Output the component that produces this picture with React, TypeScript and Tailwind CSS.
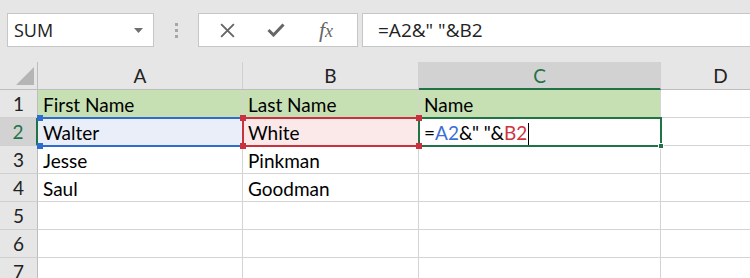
import React from 'react'

const COLS = [
  { key: 'A', w: 205 },
  { key: 'B', w: 176 },
  { key: 'C', w: 242 },
  { key: 'D', w: 120 },
]

const ROWS: { n: number; cells: (string | null)[] }[] = [
  { n: 1, cells: ['First Name', 'Last Name', 'Name', null] },
  { n: 2, cells: ['Walter', 'White', null, null] },
  { n: 3, cells: ['Jesse', 'Pinkman', null, null] },
  { n: 4, cells: ['Saul', 'Goodman', null, null] },
  { n: 5, cells: [null, null, null, null] },
  { n: 6, cells: [null, null, null, null] },
  { n: 7, cells: [null, null, null, null] },
]

const cellFont = { fontFamily: 'Lato, "Noto Sans", sans-serif' }

function Handle({ className }: { className: string }) {
  return <span className={`absolute w-[6px] h-[6px] ${className}`} />
}

export default function App() {
  return (
    <div className="w-[750px] h-[278px] overflow-hidden bg-white select-none">
      {/* Formula bar */}
      <div
        className="h-[62px] bg-[#e6e6e6] flex items-start pt-[13px] pl-[7px]"
        style={{ fontFamily: '"Open Sans", "Noto Sans", sans-serif' }}
      >
        <div className="w-[147px] h-[34px] bg-white border border-[#c6c6c6] flex items-center justify-between pl-[6px] pr-[10px]">
          <span className="text-[18px] text-[#222]">SUM</span>
          <svg width="9" height="5" viewBox="0 0 9 5">
            <path d="M0 0h9L4.5 5z" fill="#6f6f6f" />
          </svg>
        </div>
        <div className="w-[44px] h-[34px] flex flex-col items-center justify-center gap-[3px]">
          <span className="w-[3px] h-[3px] bg-[#a6a6a6]" />
          <span className="w-[3px] h-[3px] bg-[#a6a6a6]" />
          <span className="w-[3px] h-[3px] bg-[#a6a6a6]" />
        </div>
        <div className="w-[160px] h-[34px] bg-white border border-[#c6c6c6] flex items-center">
          <div className="w-[54px] flex justify-center pl-[2px]">
            <svg width="17" height="17" viewBox="0 0 16 16">
              <path d="M2 2l12 12M14 2L2 14" stroke="#666" strokeWidth="1.8" />
            </svg>
          </div>
          <div className="w-[46px] flex justify-center">
            <svg width="18" height="14" viewBox="0 0 18 14">
              <path d="M1.5 7l5 5L16.5 1.5" stroke="#666" strokeWidth="3" fill="none" />
            </svg>
          </div>
          <div className="flex-1 flex justify-center pr-[4px]">
            <span
              className="text-[22px] italic text-[#666] leading-none"
              style={{ fontFamily: '"Liberation Serif", "DejaVu Serif", serif' }}
            >
              f<span className="text-[18px]">x</span>
            </span>
          </div>
        </div>
        <div className="ml-[4px] flex-1 h-[34px] bg-white border border-r-0 border-[#c6c6c6] flex items-center pl-[15px]">
          <span className="text-[19px] text-[#222]">=A2&amp;" "&amp;B2</span>
        </div>
      </div>

      {/* Grid */}
      <div className="relative">
        {/* Column header row */}
        <div className="flex h-[28px] bg-[#e6e6e6] border-b border-[#bdbdbd]">
          <div className="w-[38px] shrink-0 border-r border-[#bdbdbd] relative">
            <svg className="absolute left-[16px] top-[5px]" width="18" height="18" viewBox="0 0 18 18">
              <path d="M18 0V18H0z" fill="#b5b5b5" />
            </svg>
          </div>
          {COLS.map((c) => (
            <div
              key={c.key}
              style={{ width: c.w, ...cellFont }}
              className={`shrink-0 flex items-center justify-center pt-[2px] text-[19px] border-r border-[#d0d0d0] ${
                c.key === 'C'
                  ? 'bg-[#d2d2d2] text-[#217346] border-b-2 border-b-[#217346] -mb-[1px]'
                  : 'text-[#222]'
              }`}
            >
              {c.key}
            </div>
          ))}
        </div>

        {/* Rows */}
        {ROWS.map((r) => (
          <div key={r.n} className="flex h-[28px]">
            <div
              style={cellFont}
              className={`w-[38px] shrink-0 flex items-center justify-center pt-[1px] text-[19px] border-b border-[#d0d0d0] ${
                r.n === 2
                  ? 'bg-[#d2d2d2] text-[#217346] border-r-2 border-r-[#217346]'
                  : 'bg-[#e6e6e6] text-[#222] border-r border-r-[#bdbdbd]'
              }`}
            >
              {r.n}
            </div>
            {COLS.map((c, i) => {
              let bg = 'bg-white'
              if (r.n === 1 && i < 3) bg = 'bg-[#c6e0b4]'
              if (r.n === 2 && i === 0) bg = 'bg-[#e9eef8]'
              if (r.n === 2 && i === 1) bg = 'bg-[#fbe9ea]'
              return (
                <div
                  key={c.key}
                  style={{ width: c.w, ...cellFont }}
                  className={`shrink-0 flex items-end pl-[5px] text-[19px] leading-[25px] text-black border-r border-b border-[#d4d4d4] ${bg}`}
                >
                  {r.cells[i]}
                </div>
              )
            })}
          </div>
        ))}

        {/* A2 reference outline */}
        <div className="absolute left-[38px] top-[55px] w-[206px] h-[30px] border-y-2 border-[#2f6cd0]">
          <Handle className="-left-[1px] -top-[4px] w-[4px] bg-[#2f6cd0]" />
          <Handle className="-left-[1px] -bottom-[4px] w-[4px] bg-[#2f6cd0]" />
        </div>

        {/* B2 reference outline */}
        <div className="absolute left-[242px] top-[55px] w-[179px] h-[30px] border-2 border-[#c8313d] border-r-0">
          <Handle className="-left-[4px] -top-[4px] bg-[#c8313d]" />
          <Handle className="-left-[4px] -bottom-[4px] bg-[#c8313d]" />
        </div>

        {/* C2 active cell */}
        <div className="absolute left-[418px] top-[55px] w-[244px] h-[30px] border-2 border-[#217346] bg-white flex items-center pl-[4px] pt-[3px]">
          <span className="text-[19px] text-black" style={cellFont}>
            =<span className="text-[#3b6fd6]">A2</span>&amp;" "&amp;<span className="text-[#d1343f]">B2</span>
          </span>
          <span className="ml-[1px] w-[1px] h-[22px] bg-black" />
          <Handle className="-right-[4px] -bottom-[4px] bg-[#217346] border border-white" />
          <Handle className="-left-[4px] -top-[4px] bg-[#c8313d]" />
          <Handle className="-left-[4px] -bottom-[4px] bg-[#c8313d]" />
        </div>
      </div>
    </div>
  )
}
